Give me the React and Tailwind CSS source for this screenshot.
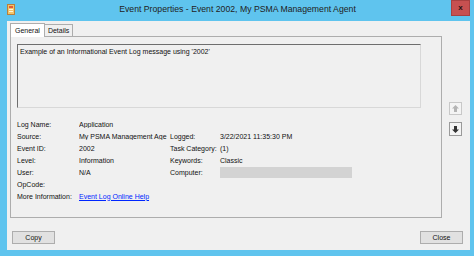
export default function App() {
  const rows = [
    { label: 'Log Name:', value: 'Application' },
    { label: 'Source:', value: 'My PSMA Management Age', label2: 'Logged:', value2: '3/22/2021 11:35:30 PM' },
    { label: 'Event ID:', value: '2002', label2: 'Task Category:', value2: '(1)' },
    { label: 'Level:', value: 'Information', label2: 'Keywords:', value2: 'Classic' },
    { label: 'User:', value: 'N/A', label2: 'Computer:', redacted: true },
    { label: 'OpCode:', value: '' },
  ]

  return (
    <div
      className="w-[474px] h-[256px] bg-[#5fc4ee] flex flex-col pl-[7px] pr-[4px] pb-[6px] text-[#111]"
      style={{ fontFamily: '"Liberation Sans", Arial, sans-serif' }}
    >
      {/* title bar */}
      <div className="h-[21px] flex items-center relative shrink-0">
        <svg width="8" height="11" viewBox="0 0 8 11" className="mt-[-2px]">
          <rect x="0.5" y="0.5" width="7" height="10" fill="#f3c46a" stroke="#b9803a" />
          <rect x="2" y="2" width="4" height="2" fill="#e05a3a" />
          <rect x="2" y="5" width="4" height="1" fill="#fff6d8" />
          <rect x="2" y="7" width="4" height="1" fill="#fff6d8" />
        </svg>
        <div className="flex-1 text-center text-[8.7px] text-[#222] leading-none mt-[-2px] pr-[10px]">
          Event Properties - Event 2002, My PSMA Management Agent
        </div>
        <div className="absolute right-0 top-0 w-[19px] h-[16px] bg-[#c75050] border border-[#a84040] flex items-center justify-center text-[8px] font-bold text-[#2a1010] leading-none">
          x
        </div>
      </div>

      {/* client area */}
      <div className="flex-1 bg-[#f0f0f0] flex flex-col pl-[3px] pt-[2px]">
        {/* tabs */}
        <div className="flex items-end h-[13px] text-[7px] leading-none">
          <div className="h-[14px] px-[4px] flex items-center bg-white border border-b-0 border-[#adadad] relative top-[1px] z-10">
            General
          </div>
          <div className="h-[12px] px-[3px] flex items-center bg-[#f0f0f0] border border-l-0 border-b-0 border-[#adadad]">
            Details
          </div>
        </div>

        <div className="flex">
          {/* tab panel */}
          <div className="w-[432px] h-[182px] border border-[#adadad] bg-[#f0f0f0] flex flex-col pl-[6px] pt-[7px] text-[7px]">
            <div className="w-[404px] h-[64px] border-t border-l border-r border-b border-t-[#6e6e6e] border-l-[#6e6e6e] border-r-[#d8d8d8] border-b-[#d8d8d8] px-[2px] pt-[2px] leading-[9px]">
              Example of an Informational Event Log message using '2002'
            </div>

            <div className="mt-[10px] flex flex-col whitespace-nowrap">
              {rows.map((r) => (
                <div key={r.label} className="h-[12px] flex items-center leading-none">
                  <div className="w-[62px]">{r.label}</div>
                  <div className="w-[91px] overflow-hidden">{r.value}</div>
                  {r.label2 && <div className="w-[50px]">{r.label2}</div>}
                  {r.value2 && <div>{r.value2}</div>}
                  {r.redacted && <div className="w-[132px] h-[11px] bg-[#d3d3d3]" />}
                </div>
              ))}
              <div className="h-[12px] flex items-center leading-none">
                <div className="w-[62px]">More Information:</div>
                <div className="text-[#0026ff] underline">Event Log Online Help</div>
              </div>
            </div>
          </div>

          {/* nav arrows */}
          <div className="flex flex-col pl-[7px] pt-[66px] gap-[7px]">
            <div className="w-[13px] h-[13px] border border-[#c8c8c8] bg-[#f4f4f4] flex items-center justify-center">
              <svg width="7" height="7" viewBox="0 0 7 7">
                <path d="M3.5 0 L7 3.5 L5 3.5 L5 7 L2 7 L2 3.5 L0 3.5 Z" fill="#b4b4b4" />
              </svg>
            </div>
            <div className="w-[13px] h-[14px] border border-[#9a9a9a] bg-[#f4f4f4] flex items-center justify-center">
              <svg width="7" height="7" viewBox="0 0 7 7">
                <path d="M3.5 7 L7 3.5 L5 3.5 L5 0 L2 0 L2 3.5 L0 3.5 Z" fill="#333" />
              </svg>
            </div>
          </div>
        </div>

        {/* buttons */}
        <div className="flex justify-between mt-[13px] pl-[2px] pr-[7px] text-[7px]">
          <button className="w-[43px] h-[13px] bg-[#e1e1e1] border border-[#adadad] leading-none">Copy</button>
          <button className="w-[43px] h-[13px] bg-[#e1e1e1] border border-[#adadad] leading-none">Close</button>
        </div>
      </div>
    </div>
  )
}
